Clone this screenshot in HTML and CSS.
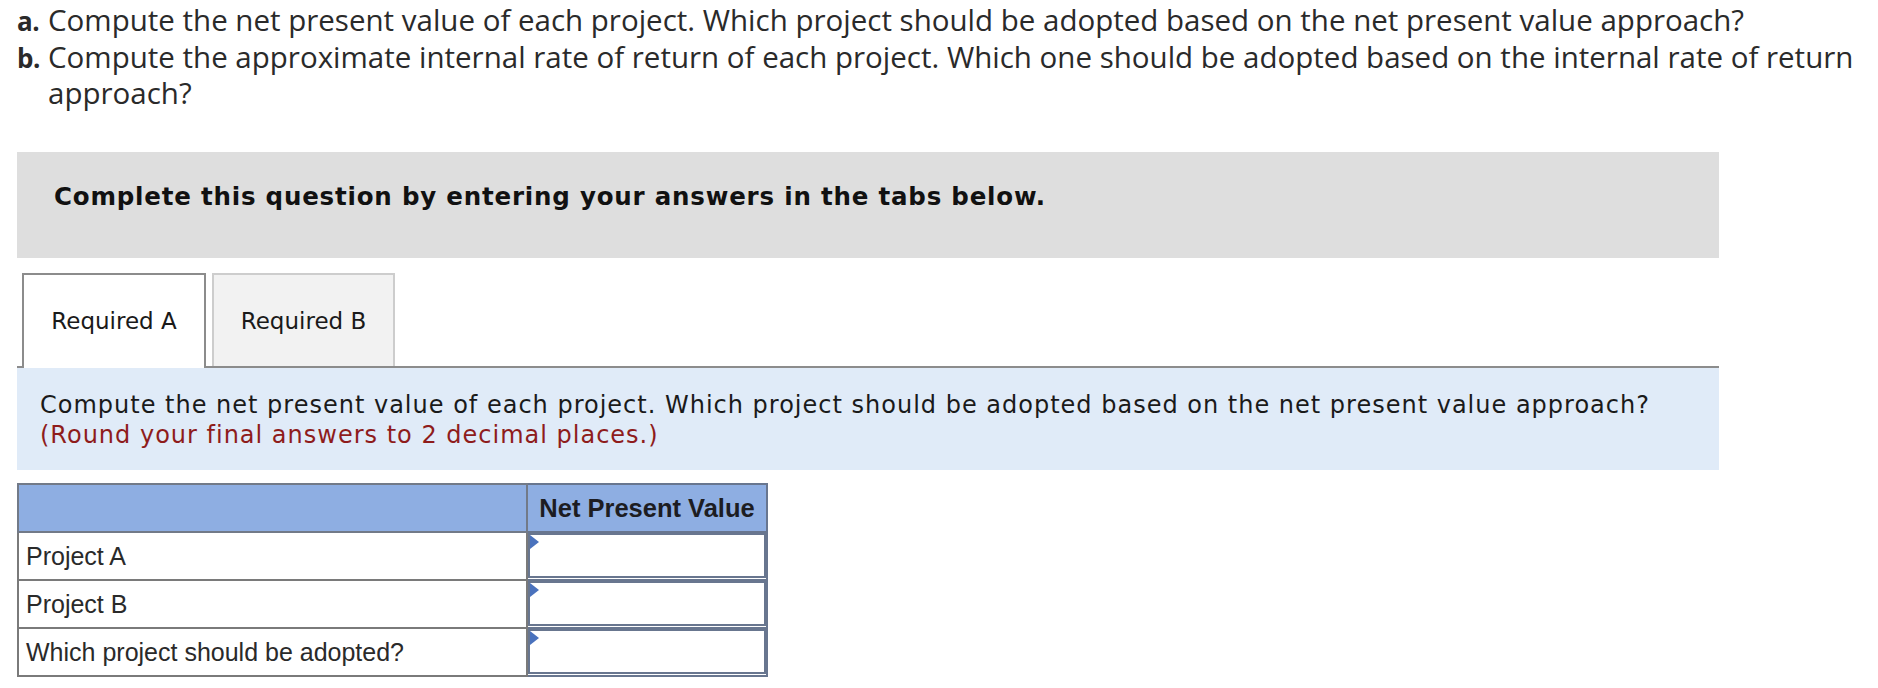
FILE: index.html
```html
<!DOCTYPE html>
<html>
<head>
<meta charset="utf-8">
<link rel="stylesheet" href="styles.css">
</head>
<body>
<div class="page">
  <div class="question">
    <div class="q-item"><span class="q-mark">a.</span><span class="q-text">Compute the net present value of each project. Which project should be adopted based on the net present value approach?</span></div>
    <div class="q-item"><span class="q-mark">b.</span><span class="q-text">Compute the approximate internal rate of return of each project. Which one should be adopted based on the internal rate of return approach?</span></div>
  </div>

  <div class="instructions">Complete this question by entering your answers in the tabs below.</div>

  <div class="tabs">
    <div class="tab tab-active">Required A</div>
    <div class="tab tab-idle">Required B</div>
  </div>

  <div class="prompt">
    <div class="prompt-main">Compute the net present value of each project. Which project should be adopted based on the net present value approach?</div>
    <div class="prompt-note">(Round your final answers to 2 decimal places.)</div>
  </div>

  <table class="answers">
    <thead>
      <tr><th class="label-head"></th><th class="val-head">Net Present Value</th></tr>
    </thead>
    <tbody>
      <tr><td class="label">Project A</td><td class="val"><div class="box"></div></td></tr>
      <tr><td class="label">Project B</td><td class="val"><div class="box"></div></td></tr>
      <tr><td class="label">Which project should be adopted?</td><td class="val"><div class="box"></div></td></tr>
    </tbody>
  </table>
</div>
</body>
</html>
```
FILE: styles.css
```css
html, body {
  margin: 0;
  padding: 0;
  background: #ffffff;
}

.page {
  padding: 2px 0 0 17px;
}

.question {
  font-family: "Open Sans", "Lato", sans-serif;
  font-size: 29.5px;
  line-height: 36px;
  color: #2a2a2a;
  width: 1861px;
}

.q-item {
  display: flex;
  align-items: baseline;
}

.q-mark {
  flex: 0 0 31px;
  font-weight: 700;
  font-size: 26px;
  letter-spacing: -0.5px;
}

.q-text {
  flex: 1;
}

.instructions {
  box-sizing: border-box;
  margin-top: 41px;
  width: 1702px;
  height: 106px;
  background: #dedede;
  padding: 30px 0 0 37px;
  font-family: "DejaVu Sans", Verdana, sans-serif;
  font-weight: 700;
  font-size: 24.5px;
  line-height: 30px;
  letter-spacing: 0.8px;
  color: #111111;
}

.tabs {
  margin-top: 15px;
  width: 1697px;
  padding-left: 5px;
  display: flex;
  border-bottom: 2px solid #8c8c8c;
  height: 93px;
}

.tab {
  box-sizing: border-box;
  height: 95px;
  display: flex;
  align-items: center;
  justify-content: center;
  font-family: "DejaVu Sans", Verdana, sans-serif;
  font-size: 23px;
  color: #1a1a1a;
}

.tab-active {
  width: 184px;
  background: #ffffff;
  border: 2px solid #8c8c8c;
  border-bottom: none;
  padding-bottom: 2px;
}

.tab-idle {
  width: 183px;
  height: 93px;
  margin-left: 6px;
  background: #f2f2f2;
  border: 2px solid #cdcdcd;
  border-bottom: none;
}

.prompt {
  width: 1679px;
  background: #e0ebf8;
  padding: 22px 0 20px 23px;
  font-family: "DejaVu Sans", Verdana, sans-serif;
  font-size: 24px;
  letter-spacing: 1px;
  line-height: 30px;
  color: #1a1a1a;
}

.prompt-note {
  color: #8e1c1c;
}

.answers {
  margin-top: 13px;
  border-collapse: collapse;
  font-family: "Liberation Sans", Arial, sans-serif;
  font-size: 25px;
  color: #2a2a2a;
}

.answers th,
.answers td {
  padding: 0;
  height: 46px;
}

.label-head {
  width: 507px;
  background: #8eaee2;
  border: 2px solid #727a88;
}

.val-head {
  width: 238px;
  background: #8eaee2;
  border: 2px solid #68768f;
  font-weight: 700;
  font-size: 25.5px;
  color: #1d1d22;
  text-align: center;
}

.label {
  border: 2px solid #7a7a7a;
  padding-left: 7px !important;
}

.val {
  border: 2px solid #68768f;
  vertical-align: top;
}

.box {
  position: relative;
  box-sizing: border-box;
  height: 45px;
  border: 2px solid #68768f;
  background: #ffffff;
}

.box::before {
  content: "";
  position: absolute;
  left: 0;
  top: 0;
  width: 0;
  height: 0;
  border-left: 9px solid #4a72bd;
  border-top: 7px solid transparent;
  border-bottom: 7px solid transparent;
}
```
